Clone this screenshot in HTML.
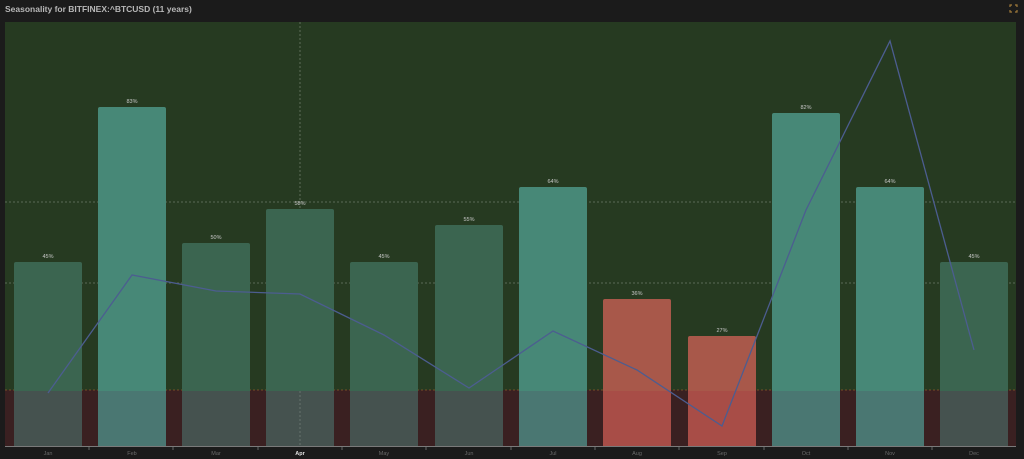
<!DOCTYPE html>
<html><head><meta charset="utf-8"><style>
html,body{margin:0;padding:0;background:#1b1b1b;width:1024px;height:459px;overflow:hidden}
svg{display:block}
text{font-family:"Liberation Sans",sans-serif}
</style></head><body>
<svg width="1024" height="459" viewBox="0 0 1024 459">
<rect width="1024" height="459" fill="#1b1b1b"/>
<text x="5" y="12" font-size="8.5" font-weight="bold" fill="#b8b8b8">Seasonality for BITFINEX:^BTCUSD (11 years)</text>
<g stroke="#a07a3a" stroke-width="1.2" fill="none">
<path d="M1010 7v-2h2M1015 5h2v2M1017 10v2h-2M1012 12h-2v-2"/>
</g>
<rect x="5" y="22" width="1011" height="368" fill="#263a21"/>
<rect x="5" y="390" width="1011" height="56" fill="#3a2021"/>
<g stroke="#6e7a68" stroke-width="0.8" stroke-dasharray="2,2">
<line x1="5" y1="202" x2="1016" y2="202"/>
<line x1="5" y1="283" x2="1016" y2="283"/>
<line x1="300" y1="22" x2="300" y2="446"/>
</g>
<line x1="5" y1="390" x2="1016" y2="390" stroke="#8a5a2a" stroke-width="0.8" stroke-dasharray="2,2"/>
<g>
<rect x="14" y="262" width="68" height="184" rx="2" fill="#3b6550"/>
<rect x="98" y="107" width="68" height="339" rx="2" fill="#478877"/>
<rect x="182" y="243" width="68" height="203" rx="2" fill="#3b6550"/>
<rect x="266" y="209" width="68" height="237" rx="2" fill="#3b6550"/>
<rect x="350" y="262" width="68" height="184" rx="2" fill="#3b6550"/>
<rect x="435" y="225" width="68" height="221" rx="2" fill="#3b6550"/>
<rect x="519" y="187" width="68" height="259" rx="2" fill="#478877"/>
<rect x="603" y="299" width="68" height="147" rx="2" fill="#a8584a"/>
<rect x="688" y="336" width="68" height="110" rx="2" fill="#a8584a"/>
<rect x="772" y="113" width="68" height="333" rx="2" fill="#478877"/>
<rect x="856" y="187" width="68" height="259" rx="2" fill="#478877"/>
<rect x="940" y="262" width="68" height="184" rx="2" fill="#3b6550"/>
</g>
<g fill="#45524f">
<rect x="14" y="391" width="68" height="55"/><rect x="182" y="391" width="68" height="55"/>
<rect x="266" y="391" width="68" height="55"/><rect x="350" y="391" width="68" height="55"/>
<rect x="435" y="391" width="68" height="55"/><rect x="940" y="391" width="68" height="55"/>
</g>
<g fill="#4a7772">
<rect x="98" y="391" width="68" height="55"/><rect x="519" y="391" width="68" height="55"/>
<rect x="772" y="391" width="68" height="55"/><rect x="856" y="391" width="68" height="55"/>
</g>
<g fill="#a84d47">
<rect x="603" y="391" width="68" height="55"/><rect x="688" y="391" width="68" height="55"/>
</g>
<line x1="300" y1="391" x2="300" y2="446" stroke="#6e7a74" stroke-width="0.8" stroke-dasharray="2,2"/>
<g font-size="5.5" fill="#c8c8c8" text-anchor="middle">
<text x="48" y="258">45%</text><text x="132" y="103">83%</text><text x="216" y="239">50%</text>
<text x="300" y="205">58%</text><text x="384" y="258">45%</text><text x="469" y="221">55%</text>
<text x="553" y="183">64%</text><text x="637" y="295">36%</text><text x="722" y="332">27%</text>
<text x="806" y="109">82%</text><text x="890" y="183">64%</text><text x="974" y="258">45%</text>
</g>
<polyline fill="none" stroke="#4c5d90" stroke-width="1.3" points="48,393 132,275 216,291 300,294 384,335 469,388 553,331 637,370 722,426 806,210 890,41 974,350"/>
<line x1="5" y1="446.5" x2="1016" y2="446.5" stroke="#7a7a7a" stroke-width="1"/>
<g stroke="#7a7a7a" stroke-width="0.8">
<line x1="89" y1="446" x2="89" y2="450"/><line x1="173" y1="446" x2="173" y2="450"/>
<line x1="258" y1="446" x2="258" y2="450"/><line x1="342" y1="446" x2="342" y2="450"/>
<line x1="426" y1="446" x2="426" y2="450"/><line x1="511" y1="446" x2="511" y2="450"/>
<line x1="595" y1="446" x2="595" y2="450"/><line x1="679" y1="446" x2="679" y2="450"/>
<line x1="764" y1="446" x2="764" y2="450"/><line x1="848" y1="446" x2="848" y2="450"/>
<line x1="932" y1="446" x2="932" y2="450"/>
</g>
<g font-size="5.5" fill="#6a6a6a" text-anchor="middle">
<text x="48" y="455">Jan</text><text x="132" y="455">Feb</text><text x="216" y="455">Mar</text>
<text x="300" y="455" fill="#e0e0e0" font-weight="bold">Apr</text><text x="384" y="455">May</text><text x="469" y="455">Jun</text>
<text x="553" y="455">Jul</text><text x="637" y="455">Aug</text><text x="722" y="455">Sep</text>
<text x="806" y="455">Oct</text><text x="890" y="455">Nov</text><text x="974" y="455">Dec</text>
</g>
</svg>
</body></html>
